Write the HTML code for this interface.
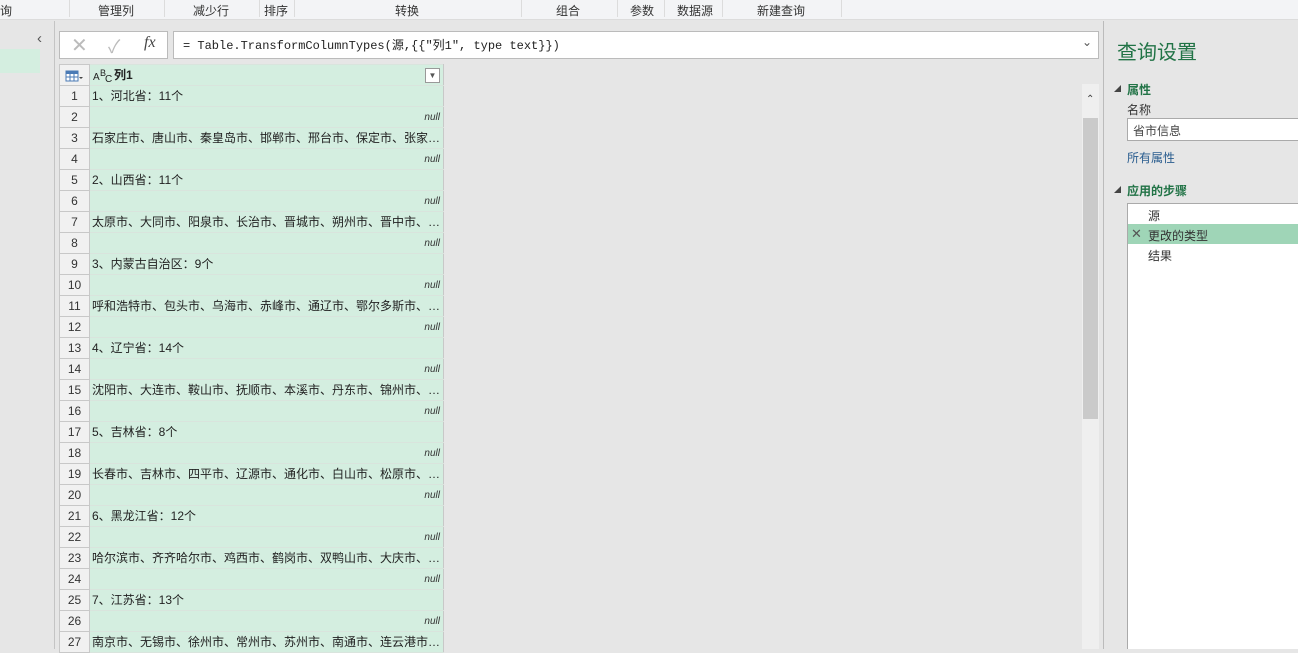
<!DOCTYPE html>
<html><head><meta charset="utf-8"><style>
*{margin:0;padding:0;box-sizing:border-box}
body{width:1298px;height:649px;overflow:hidden;background:#e6e6e6;font-family:"Liberation Sans","Noto Sans CJK SC",sans-serif;font-size:12px;color:#222;position:relative}
.abs{position:absolute}
.rib{left:0;top:0;width:1298px;height:20px;background:#f3f4f6;border-bottom:1px solid #dcdcdc}
.rib span{position:absolute;top:2px;font-size:12px;color:#333}
.rib i{position:absolute;top:0;width:1px;height:17px;background:#dcdcdc}
table{border-collapse:collapse;position:absolute;left:59px;top:64px;width:385px;table-layout:fixed}
td{height:21px;border:1px solid #c8c8c8;font-size:12px;white-space:nowrap;overflow:hidden;line-height:19px}
td.n{width:30px;background:#f1f1f1;text-align:center;color:#333;border-color:#c8c8c8}
td.v{background:#d4eee0;padding-left:2px;border-color:#d9e4dd #c8c8c8}
td.nl{text-align:right;font-style:italic;font-size:10px;padding-right:3px;color:#333}
.hd{position:relative;height:19px;overflow:hidden}
.hd b{position:absolute;font-weight:normal;line-height:10px}
</style></head><body>
<div class="abs rib">
<span style="left:0">询</span><i style="left:69px"></i>
<span style="left:98px">管理列</span><i style="left:164px"></i>
<span style="left:193px">减少行</span><i style="left:259px"></i>
<span style="left:264px">排序</span><i style="left:294px"></i>
<span style="left:395px">转换</span><i style="left:521px"></i>
<span style="left:556px">组合</span><i style="left:617px"></i>
<span style="left:630px">参数</span><i style="left:664px"></i>
<span style="left:677px">数据源</span><i style="left:722px"></i>
<span style="left:757px">新建查询</span><i style="left:841px"></i>
</div>
<div class="abs" style="left:54px;top:21px;width:1px;height:628px;background:#c4c4c4"></div>
<div class="abs" style="left:37px;top:30px;font-size:15px;color:#555">&#8249;</div>
<div class="abs" style="left:0;top:49px;width:40px;height:24px;background:#d4eee0"></div>
<div class="abs" style="left:59px;top:31px;width:109px;height:28px;background:#fff;border:1px solid #bbb"></div>
<div class="abs" style="left:71px;top:33px;font-size:20px;color:#bbb">&#10005;</div>
<div class="abs" style="left:108px;top:33px;font-size:18px;color:#bbb">&#10003;</div>
<div class="abs" style="left:144px;top:34px;font-size:16px;font-style:italic;font-family:'Liberation Serif',serif;color:#444">fx</div>
<div class="abs" style="left:173px;top:31px;width:926px;height:28px;background:#fff;border:1px solid #bbb;font-family:'Liberation Mono','Noto Sans CJK SC',monospace;font-size:12px;padding:4px 0 0 9px;color:#222">= Table.TransformColumnTypes(源,{{"列1", type text}})<span style="position:absolute;right:6px;top:3px;color:#555;font-family:'Liberation Sans'">&#8964;</span></div>
<table>
<tr><td class="n" style="background:#f1f1f1"><div style="height:19px;padding-top:3px"><svg width="20" height="12"><rect x="1" y="1" width="12" height="10" fill="#fff" stroke="#4a7ab5"/><rect x="1" y="1" width="12" height="3" fill="#4a7ab5"/><path d="M5 4v7M9 4v7M1 7h12" stroke="#4a7ab5"/><path d="M14 7l2 2 2-2z" fill="#444"/></svg></div></td><td class="v"><div class="hd"><b style="left:1px;top:7px;font-size:10px">A</b><b style="left:8px;top:2px;font-size:9px">B</b><b style="left:13px;top:9px;font-size:10px">C</b><span style="position:absolute;left:22px;top:0;font-weight:bold">列1</span><span style="position:absolute;right:3px;top:2px;width:15px;height:15px;border:1px solid #999;background:#fff;font-size:8px;text-align:center;line-height:13px;color:#555">&#9660;</span></div></td></tr>
<tr><td class="n">1</td><td class="v">1、河北省：11个</td></tr>
<tr><td class="n">2</td><td class="v nl">null</td></tr>
<tr><td class="n">3</td><td class="v">石家庄市、唐山市、秦皇岛市、邯郸市、邢台市、保定市、张家…</td></tr>
<tr><td class="n">4</td><td class="v nl">null</td></tr>
<tr><td class="n">5</td><td class="v">2、山西省：11个</td></tr>
<tr><td class="n">6</td><td class="v nl">null</td></tr>
<tr><td class="n">7</td><td class="v">太原市、大同市、阳泉市、长治市、晋城市、朔州市、晋中市、…</td></tr>
<tr><td class="n">8</td><td class="v nl">null</td></tr>
<tr><td class="n">9</td><td class="v">3、内蒙古自治区：9个</td></tr>
<tr><td class="n">10</td><td class="v nl">null</td></tr>
<tr><td class="n">11</td><td class="v">呼和浩特市、包头市、乌海市、赤峰市、通辽市、鄂尔多斯市、…</td></tr>
<tr><td class="n">12</td><td class="v nl">null</td></tr>
<tr><td class="n">13</td><td class="v">4、辽宁省：14个</td></tr>
<tr><td class="n">14</td><td class="v nl">null</td></tr>
<tr><td class="n">15</td><td class="v">沈阳市、大连市、鞍山市、抚顺市、本溪市、丹东市、锦州市、…</td></tr>
<tr><td class="n">16</td><td class="v nl">null</td></tr>
<tr><td class="n">17</td><td class="v">5、吉林省：8个</td></tr>
<tr><td class="n">18</td><td class="v nl">null</td></tr>
<tr><td class="n">19</td><td class="v">长春市、吉林市、四平市、辽源市、通化市、白山市、松原市、…</td></tr>
<tr><td class="n">20</td><td class="v nl">null</td></tr>
<tr><td class="n">21</td><td class="v">6、黑龙江省：12个</td></tr>
<tr><td class="n">22</td><td class="v nl">null</td></tr>
<tr><td class="n">23</td><td class="v">哈尔滨市、齐齐哈尔市、鸡西市、鹤岗市、双鸭山市、大庆市、…</td></tr>
<tr><td class="n">24</td><td class="v nl">null</td></tr>
<tr><td class="n">25</td><td class="v">7、江苏省：13个</td></tr>
<tr><td class="n">26</td><td class="v nl">null</td></tr>
<tr><td class="n">27</td><td class="v">南京市、无锡市、徐州市、常州市、苏州市、南通市、连云港市…</td></tr>
</table>
<div class="abs" style="left:1082px;top:84px;width:17px;height:565px;background:#efefef"></div>
<div class="abs" style="left:1086px;top:94px;font-size:10px;color:#444">&#8963;</div>
<div class="abs" style="left:1083px;top:118px;width:15px;height:301px;background:#cacaca"></div>
<div class="abs" style="left:1103px;top:21px;width:1px;height:628px;background:#bbb"></div>
<div class="abs" style="left:1117px;top:36px;font-size:20px;color:#217346">查询设置</div>
<div class="abs" style="left:1114px;top:84px;font-size:7px;color:#444">&#9698;</div>
<div class="abs" style="left:1127px;top:81px;font-size:12px;font-weight:bold;color:#217346">属性</div>
<div class="abs" style="left:1127px;top:101px;font-size:12px;color:#333">名称</div>
<div class="abs" style="left:1127px;top:118px;width:171px;height:23px;background:#fff;border:1px solid #aaa;border-right:none;padding:3px 0 0 5px;color:#444">省市信息</div>
<div class="abs" style="left:1127px;top:149px;color:#2a5d8f">所有属性</div>
<div class="abs" style="left:1114px;top:185px;font-size:7px;color:#444">&#9698;</div>
<div class="abs" style="left:1127px;top:182px;font-weight:bold;color:#217346">应用的步骤</div>
<div class="abs" style="left:1127px;top:203px;width:171px;height:446px;background:#fff;border:1px solid #aaa;border-right:none;border-bottom:none"></div>
<div class="abs" style="left:1148px;top:207px;color:#333">源</div>
<div class="abs" style="left:1128px;top:224px;width:170px;height:20px;background:#9fd5b7"></div>
<div class="abs" style="left:1131px;top:226px;color:#555;font-size:13px">&#10005;</div>
<div class="abs" style="left:1148px;top:227px;color:#333">更改的类型</div>
<div class="abs" style="left:1148px;top:247px;color:#333">结果</div>
</body></html>
